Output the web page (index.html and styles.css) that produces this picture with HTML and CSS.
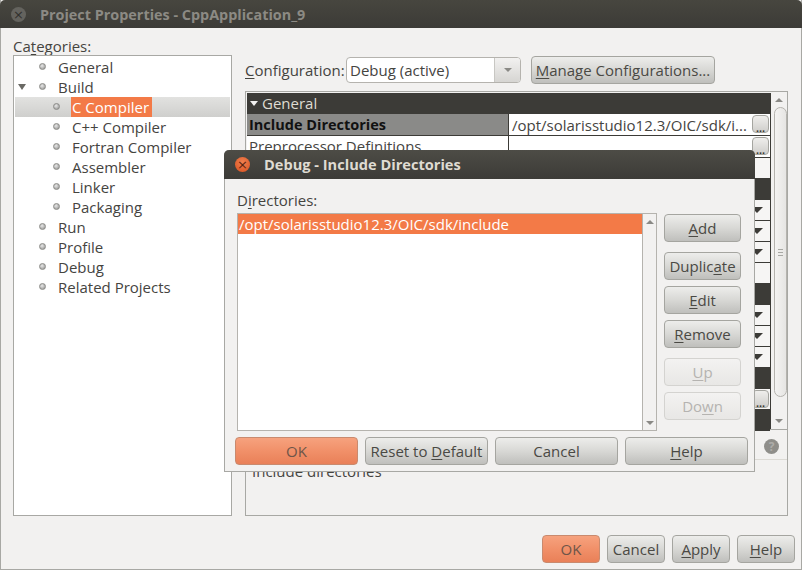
FILE: index.html
```html
<!DOCTYPE html>
<html lang="en">
<head>
    <meta charset="UTF-8">
    <title>Project Properties - CppApplication_9</title>
    <link rel="stylesheet" href="styles.css">
</head>
<body>
    <div class="window">
        <div class="titlebar">
            <span class="close close-off">&#215;</span>
            <span class="title title-off">Project Properties - CppApplication_9</span>
        </div>
        <div class="main">
            <div class="left">
                <div class="cat-label">Ca<u>t</u>egories:</div>
                <div class="tree">
                    <div class="node"><i class="bullet"></i>General</div>
                    <div class="node"><i class="twist"></i><i class="bullet"></i>Build</div>
                    <div class="node sub current"><i class="bullet"></i><span class="picked">C Compiler</span></div>
                    <div class="node sub"><i class="bullet"></i>C++ Compiler</div>
                    <div class="node sub"><i class="bullet"></i>Fortran Compiler</div>
                    <div class="node sub"><i class="bullet"></i>Assembler</div>
                    <div class="node sub"><i class="bullet"></i>Linker</div>
                    <div class="node sub"><i class="bullet"></i>Packaging</div>
                    <div class="node"><i class="bullet"></i>Run</div>
                    <div class="node"><i class="bullet"></i>Profile</div>
                    <div class="node"><i class="bullet"></i>Debug</div>
                    <div class="node"><i class="bullet"></i>Related Projects</div>
                </div>
            </div>
            <div class="right">
                <div class="config">
                    <span class="config-label"><u>C</u>onfiguration:</span>
                    <div class="combo">
                        <span class="combo-text">Debug (active)</span>
                        <span class="combo-btn"><i class="arrow-down"></i></span>
                    </div>
                    <button class="btn manage"><u>M</u>anage Configurations...</button>
                </div>
                <div class="sheet">
                    <div class="rows">
                        <div class="row dark group"><i class="group-arrow"></i>General</div>
                        <div class="row">
                            <span class="name name-on">Include Directories</span>
                            <span class="value">/opt/solarisstudio12.3/OIC/sdk/i...</span>
                            <button class="dots">...</button>
                        </div>
                        <div class="row">
                            <span class="name">Preprocessor Definitions</span>
                            <span class="value"></span>
                            <button class="dots">...</button>
                        </div>
                        <div class="row off"></div>
                        <div class="row dark"></div>
                        <div class="row off"><i class="cell-arrow"></i></div>
                        <div class="row off"><i class="cell-arrow"></i></div>
                        <div class="row off"><i class="cell-arrow"></i></div>
                        <div class="row off"></div>
                        <div class="row dark"></div>
                        <div class="row off"><i class="cell-arrow"></i></div>
                        <div class="row off"><i class="cell-arrow"></i></div>
                        <div class="row off"><i class="cell-arrow"></i></div>
                        <div class="row dark"></div>
                        <div class="row off"><button class="dots dots-low">...</button></div>
                        <div class="row dark"></div>
                    </div>
                    <div class="vscroll">
                        <i class="arrow-up"></i>
                        <div class="thumb"><span class="grip"></span></div>
                        <i class="arrow-down"></i>
                    </div>
                </div>
                <div class="desc">
                    <div class="desc-tools"><span class="help-icon">?</span></div>
                    <div class="desc-text">Include directories</div>
                </div>
            </div>
        </div>
        <div class="footer">
            <button class="btn wide ok">OK</button>
            <button class="btn wide">Cancel</button>
            <button class="btn wide"><u>A</u>pply</button>
            <button class="btn wide"><u>H</u>elp</button>
        </div>

        <div class="dialog">
            <div class="titlebar dialog-bar">
                <span class="close close-on">&#215;</span>
                <span class="title">Debug - Include Directories</span>
            </div>
            <div class="dialog-main">
                <div class="dir-label">D<u>i</u>rectories:</div>
                <div class="dir-body">
                    <div class="list">
                        <div class="list-rows">
                            <div class="list-row">/opt/solarisstudio12.3/OIC/sdk/include</div>
                        </div>
                        <div class="list-scroll">
                            <i class="arrow-up"></i>
                            <i class="arrow-down"></i>
                        </div>
                    </div>
                    <div class="side">
                        <button class="btn"><u>A</u>dd</button>
                        <button class="btn spaced">Duplic<u>a</u>te</button>
                        <button class="btn"><u>E</u>dit</button>
                        <button class="btn"><u>R</u>emove</button>
                        <button class="btn spaced off-btn"><u>U</u>p</button>
                        <button class="btn off-btn">Do<u>w</u>n</button>
                    </div>
                </div>
            </div>
            <div class="dialog-actions">
                <button class="btn ok">OK</button>
                <button class="btn">Reset to <u>D</u>efault</button>
                <button class="btn">Cancel</button>
                <button class="btn"><u>H</u>elp</button>
            </div>
        </div>
    </div>
</body>
</html>
```

FILE: styles.css
```css
* {
    box-sizing: border-box;
}
body {
    margin: 0;
    background-color: #f2f1f0;
    font-family: "Open Sans", "Noto Sans", sans-serif;
    font-size: 15px;
    color: #45443f;
    overflow: hidden;
}
u {
    text-underline-offset: 2px;
}
.window {
    position: relative;
    width: 802px;
    height: 570px;
    display: flex;
    flex-direction: column;
    background-color: #f2f1f0;
    border: 1px solid #a8a8a4;
    border-top: none;
}
.titlebar {
    height: 28px;
    margin: 0 -1px;
    display: flex;
    align-items: center;
    flex-shrink: 0;
    padding-left: 11px;
    background: linear-gradient(#47463f, #3c3b37);
    border-radius: 5px 5px 0 0;
}
.title {
    margin: 0 0 1px 14px;
    font-weight: bold;
    font-size: 14.6px;
    color: #dfdbd2;
}
.title-off {
    margin: 0 0 0 14px;
    font-size: 14.4px;
    color: #8c8a84;
}
.close {
    width: 15px;
    height: 15px;
    border-radius: 50%;
    display: flex;
    align-items: center;
    justify-content: center;
    font-size: 13px;
    line-height: 1;
    font-family: "DejaVu Sans", sans-serif;
}
.close-off {
    background-color: #64635e;
    color: #32312d;
}
.close-on {
    background: radial-gradient(circle at 50% 35%, #f0804f, #d8501f);
    color: #5a2410;
}

/* main window */
.main {
    display: flex;
    gap: 13px;
    height: 488px;
    padding: 10px 13px 0 12px;
}
.left {
    width: 219px;
    flex-shrink: 0;
    display: flex;
    flex-direction: column;
}
.cat-label {
    height: 17px;
    line-height: 17px;
}
.tree {
    height: 461px;
    padding: 1px 1px;
    background-color: white;
    border: 1px solid #a8a8a4;
}
.node {
    position: relative;
    height: 20px;
    line-height: 20px;
    padding-left: 43px;
}
.node.sub {
    padding-left: 57px;
}
.node.current {
    background: linear-gradient(#e2e2e0, #cfcfcd);
}
.picked {
    display: inline-block;
    height: 20px;
    margin-left: -1px;
    padding: 0 3px 0 1px;
    background-color: #f37a47;
    color: white;
}
.bullet {
    position: absolute;
    left: 24px;
    top: 6px;
    width: 7px;
    height: 7px;
    border-radius: 50%;
    background: radial-gradient(circle at 40% 35%, #e8e8e8, #8e8e8c);
    border: 1px solid #8b8b88;
}
.sub .bullet {
    left: 38px;
}
.twist {
    position: absolute;
    left: 3px;
    top: 7px;
    border-left: 4px solid transparent;
    border-right: 4px solid transparent;
    border-top: 6px solid #6a6964;
}
.right {
    flex: 1;
    min-width: 0;
    display: flex;
    flex-direction: column;
    padding-top: 18px;
}
.config {
    height: 28px;
    display: flex;
    align-items: center;
}
.config-label {
    width: 101px;
}
.combo {
    width: 175px;
    height: 26px;
    display: flex;
    background-color: white;
    border: 1px solid #b5b3ae;
    border-radius: 4px;
    overflow: hidden;
}
.combo-text {
    flex: 1;
    line-height: 24px;
    padding-left: 3px;
}
.combo-btn {
    width: 26px;
    display: flex;
    align-items: center;
    justify-content: center;
    background: linear-gradient(#f2f1f0, #d6d5d2);
    border-left: 1px solid #c8c7c3;
}
.btn {
    height: 28px;
    padding: 0;
    font: inherit;
    color: #4a4944;
    background: linear-gradient(#ededeb, #d8d8d5 50%, #bfbfbc);
    border: 1px solid #a5a5a0;
    border-radius: 4px;
}
.manage {
    width: 184px;
    margin-left: 10px;
}
.wide {
    width: 58px;
}
.ok {
    color: #6e5549;
    background: linear-gradient(#f6a27e, #f19069 50%, #e98058);
    border-color: #c98a6e;
}
.off-btn {
    color: #b5b3b0;
    background: linear-gradient(#f3f2f1, #e8e7e5);
    border-color: #d4d3d0;
}
.arrow-up,
.arrow-down {
    display: block;
    width: 0;
    height: 0;
    border-left: 4px solid transparent;
    border-right: 4px solid transparent;
}
.arrow-up {
    border-bottom: 4px solid #8a8985;
}
.arrow-down {
    border-top: 4px solid #8a8985;
}

/* property sheet */
.sheet {
    height: 339px;
    margin-top: 7px;
    display: flex;
    padding: 1px 0 0 1px;
    border: 1px solid #a8a8a4;
    background-color: #f2f1f0;
}
.rows {
    width: 524px;
    display: flex;
    flex-direction: column;
    border-right: 1px solid #3c3b37;
}
.row {
    position: relative;
    flex: 0 0 21px;
    display: flex;
    align-items: center;
    background-color: white;
    border-bottom: 1px solid #3c3b37;
}
.row.off {
    background-color: #f6f5f4;
}
.row.dark {
    background-color: #3c3b37;
}
.group {
    color: #dfdbd2;
    padding-left: 3px;
}
.group-arrow {
    margin-right: 4px;
    border-left: 4px solid transparent;
    border-right: 4px solid transparent;
    border-top: 5px solid #f2f1f0;
}
.name {
    width: 262px;
    height: 100%;
    padding-left: 2px;
    line-height: 21px;
    border-right: 1px solid #3c3b37;
}
.name-on {
    background-color: #8a8a88;
    color: #111;
    font-weight: bold;
    font-size: 14.5px;
}
.value {
    flex: 1;
    padding-left: 3px;
}
.dots,
.cell-arrow {
    position: absolute;
    right: 1px;
}
.dots {
    top: 1px;
    width: 17px;
    height: 18px;
    padding: 0;
    font-size: 11px;
    font-weight: bold;
    line-height: 24px;
    color: #3c3b37;
    background: linear-gradient(#efeeec, #cfcecb);
    border: 1px solid #a5a5a0;
    border-radius: 4px;
    overflow: hidden;
}
.cell-arrow {
    right: 7px;
    top: 7px;
    border-left: 6px solid transparent;
    border-right: 6px solid transparent;
    border-top: 6px solid #3c3b37;
}
.vscroll {
    flex: 1;
    display: flex;
    flex-direction: column;
    align-items: center;
    padding: 5px 0 0 0;
}
.thumb {
    width: 13px;
    height: 290px;
    margin: 5px 0 22px 3px;
    display: flex;
    align-items: center;
    justify-content: center;
    background: linear-gradient(90deg, #f4f3f2, #e6e5e3);
    border: 1px solid #b5b3ae;
    border-radius: 7px;
}
.grip {
    width: 5px;
    height: 7px;
    background: repeating-linear-gradient(#a8a8a4 0 1px, transparent 1px 3px);
}

/* description */
.desc {
    height: 86px;
    border: 1px solid #a8a8a4;
    border-top: none;
}
.desc-tools {
    height: 30px;
    display: flex;
    align-items: center;
    justify-content: flex-end;
    padding: 3px 8px 0 0;
    border-bottom: 1px solid #dcdad5;
}
.help-icon {
    width: 15px;
    height: 15px;
    border-radius: 50%;
    background-color: #8f8e8a;
    color: #adaca9;
    font-size: 12px;
    font-weight: bold;
    line-height: 15px;
    text-align: center;
}
.desc-text {
    padding: 1px 0 0 6px;
}
.footer {
    display: flex;
    justify-content: flex-end;
    gap: 7px;
    padding: 19px 6px 0 0;
}

/* dialog on top of the main window */
.dialog {
    position: absolute;
    left: 223px;
    top: 150px;
    width: 531px;
    height: 322px;
    display: flex;
    flex-direction: column;
    background-color: #f2f1f0;
    border: 1px solid #a8a8a4;
    border-top: none;
    border-radius: 5px 5px 0 0;
}
.dialog-bar {
    height: 29px;
    padding-left: 11px;
    background: linear-gradient(#4d4c46, #3c3b37);
}
.dialog-main {
    padding: 0 13px 0 12px;
}
.dir-label {
    height: 34px;
    padding-top: 12px;
    line-height: 18px;
}
.dir-body {
    display: flex;
    gap: 7px;
}
.list {
    width: 420px;
    height: 218px;
    display: flex;
    background-color: white;
    border: 1px solid #b5b3ae;
}
.list-rows {
    width: 404px;
}
.list-row {
    height: 20px;
    line-height: 20px;
    padding-left: 1px;
    background-color: #f37a47;
    color: white;
}
.list-scroll {
    flex: 1;
    display: flex;
    flex-direction: column;
    justify-content: space-between;
    align-items: center;
    padding: 6px 0 5px;
    background-color: #f2f1f0;
    border-left: 1px solid #b5b3ae;
}
.side {
    width: 77px;
    display: flex;
    flex-direction: column;
    gap: 6px;
    padding-top: 1px;
}
.spaced {
    margin-top: 4px;
}
.dialog-actions {
    display: flex;
    gap: 7px;
    padding: 6px 6px 0 10px;
}
.dialog-actions .btn {
    width: 123px;
}
```
